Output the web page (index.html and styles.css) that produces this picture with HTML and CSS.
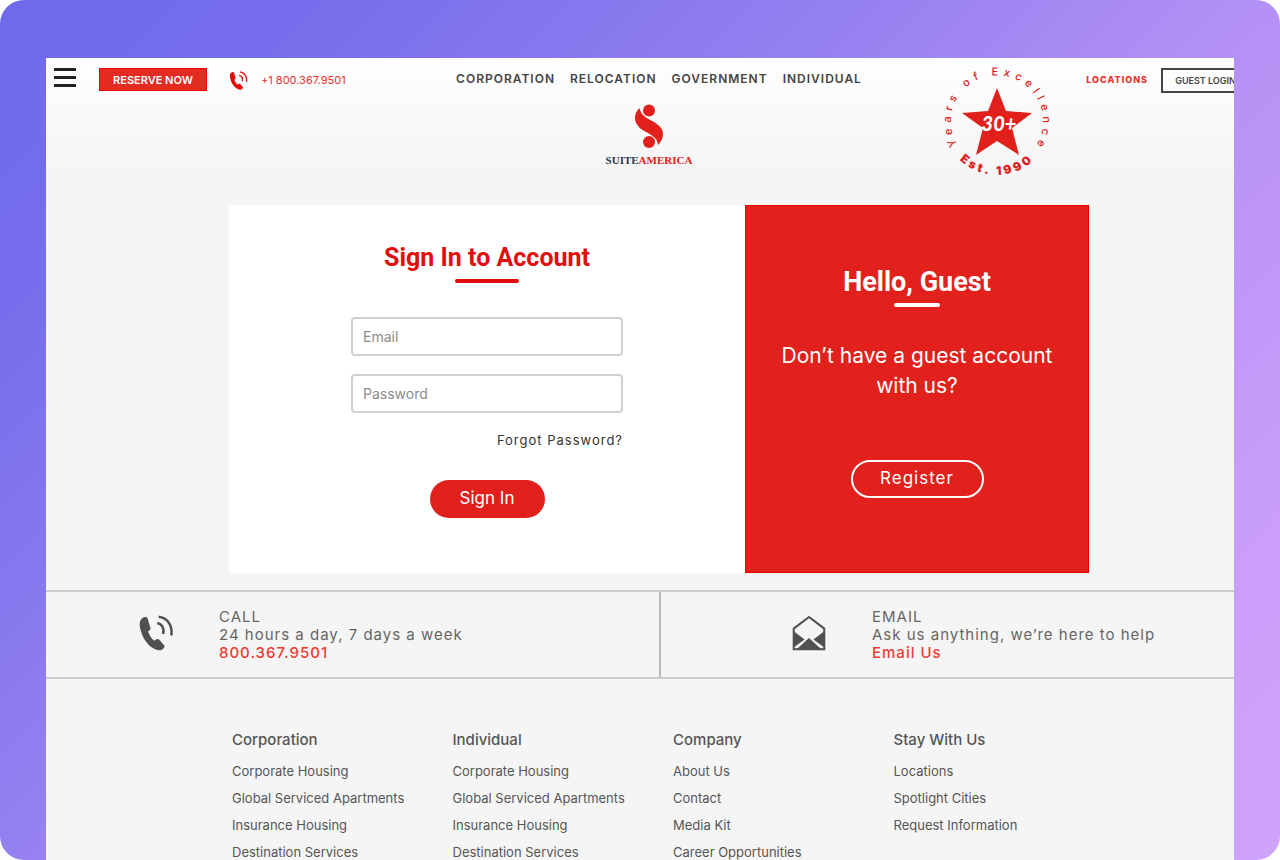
FILE: index.html
```html
<!DOCTYPE html>
<html lang="en">
<head>
    <meta charset="UTF-8">
    <meta name="viewport" content="width=device-width, initial-scale=1.0">
    <title>Sign In | SuiteAmerica</title>
    <link rel="stylesheet" href="styles.css">
</head>
<body>
    <svg class="symbols" aria-hidden="true">
        <symbol id="phone" viewBox="30 33 101 102">
            <path fill="currentColor" d="M45 40C33 45 32 60 38 80C45 105 65 130 88 133C97 134 104 127 105 121L90 103C85 99 80 103 76 106C70 104 61 88 58 80C63 77 67 73 64 68L57 43C55 39 50 38 45 40Z"/>
            <path fill="none" stroke="currentColor" stroke-width="7" d="M84 56C98 58 104 70 101 87M88 38C113 41 128 62 124 91"/>
        </symbol>
    </svg>

    <div class="frame">
        <div class="site">
            <div class="page">
                <header class="header">
                    <div class="header-left">
                        <button class="menu" aria-label="Menu"><span></span><span></span><span></span></button>
                        <a class="reserve" href="#">RESERVE NOW</a>
                        <a class="phone" href="#"><svg><use href="#phone"/></svg>+1 800.367.9501</a>
                    </div>
                    <div class="header-center">
                        <nav class="nav">
                            <a href="#">CORPORATION</a>
                            <a href="#">RELOCATION</a>
                            <a href="#">GOVERNMENT</a>
                            <a href="#">INDIVIDUAL</a>
                        </nav>
                        <a class="logo" href="#">
                            <svg viewBox="0 0 28 45">
                                <circle cx="14" cy="6.5" r="6"/>
                                <circle cx="14" cy="38" r="6"/>
                                <path d="M4.5 4C-1 9-1 16 2 20.5C6 27 15 29 19.5 33.5C22 36 22.5 38 23 41C29 35 29 28 26 24C21 17 12 16 7.5 10.5C5.5 8 5 6 4.5 4Z"/>
                            </svg>
                            <span class="logo-name">SUITE<b>AMERICA</b></span>
                        </a>
                    </div>
                    <div class="header-right">
                        <svg class="badge" viewBox="0 0 110 110">
                            <path id="arc-top" fill="none" d="M15.5 78A46 46 0 1 1 94.5 78"/>
                            <path id="arc-bottom" fill="none" d="M14 89A54 54 0 0 0 96 89"/>
                            <path class="star" d="M55 21L64 44L90 46L70 61L77 88L55 74L34 88L41 61L20 46L46 44Z"/>
                            <text class="badge-years"><textPath href="#arc-top">Years of Excellence</textPath></text>
                            <text class="badge-est"><textPath href="#arc-bottom" startOffset="50%">Est. 1990</textPath></text>
                            <text class="badge-num" x="57" y="64">30+</text>
                        </svg>
                        <a class="locations" href="#">LOCATIONS</a>
                        <a class="guest-login" href="#">GUEST LOGIN</a>
                    </div>
                </header>

                <main class="card">
                    <form class="signin">
                        <h1>Sign In to Account</h1>
                        <input type="email" placeholder="Email" aria-label="Email">
                        <input type="password" placeholder="Password" aria-label="Password">
                        <a class="forgot" href="#">Forgot Password?</a>
                        <button class="btn" type="button">Sign In</button>
                    </form>
                    <section class="guest">
                        <h2>Hello, Guest</h2>
                        <p>Don’t have a guest account with us?</p>
                        <button class="btn btn-outline" type="button">Register</button>
                    </section>
                </main>

                <section class="contact">
                    <div class="contact-item">
                        <svg class="contact-icon"><use href="#phone"/></svg>
                        <div>
                            <p>CALL</p>
                            <p>24 hours a day, 7 days a week</p>
                            <a href="#">800.367.9501</a>
                        </div>
                    </div>
                    <div class="contact-item">
                        <svg class="contact-icon" viewBox="0 0 96 106">
                            <path fill="none" stroke="currentColor" stroke-width="6" d="M3 40L48 6L93 40V101H3Z"/>
                            <path fill="currentColor" d="M3 48L35 72L3 96ZM93 48L61 72L93 96ZM10 102L48 68L86 102Z"/>
                        </svg>
                        <div>
                            <p>EMAIL</p>
                            <p>Ask us anything, we’re here to help</p>
                            <a href="#">Email Us</a>
                        </div>
                    </div>
                </section>

                <footer class="footer">
                    <div>
                        <h3>Corporation</h3>
                        <a href="#">Corporate Housing</a>
                        <a href="#">Global Serviced Apartments</a>
                        <a href="#">Insurance Housing</a>
                        <a href="#">Destination Services</a>
                    </div>
                    <div>
                        <h3>Individual</h3>
                        <a href="#">Corporate Housing</a>
                        <a href="#">Global Serviced Apartments</a>
                        <a href="#">Insurance Housing</a>
                        <a href="#">Destination Services</a>
                    </div>
                    <div>
                        <h3>Company</h3>
                        <a href="#">About Us</a>
                        <a href="#">Contact</a>
                        <a href="#">Media Kit</a>
                        <a href="#">Career Opportunities</a>
                    </div>
                    <div>
                        <h3>Stay With Us</h3>
                        <a href="#">Locations</a>
                        <a href="#">Spotlight Cities</a>
                        <a href="#">Request Information</a>
                    </div>
                </footer>
            </div>
        </div>
    </div>
</body>
</html>
```
FILE: styles.css
```css
* {
    box-sizing: border-box;
}
body {
    margin: 0;
    background: #fff;
    font-family: Inter, "Liberation Sans", sans-serif;
    color: #555;
}
a {
    color: inherit;
    text-decoration: none;
}
h1, h2, h3, p {
    margin: 0;
}
button, input {
    font-family: inherit;
}
.symbols {
    display: none;
}
.frame {
    height: 100vh;
    overflow: hidden;
    padding: 58px 46px 0;
    border-radius: 24px;
    background: linear-gradient(135deg, #6f69ec 0%, #756dec 14%, #9580f0 40%, #b591f5 60%, #cb9efb 85%, #cfa2fb 100%);
}
.site {
    height: 100%;
    overflow: hidden;
    background: #f5f5f5;
}
/* a little wider than the frame, runs off its right edge */
.page {
    width: calc(100% + 38px);
}

.header {
    display: grid;
    grid-template-columns: 1fr auto 1fr;
    height: 125px;
    background: linear-gradient(#fefefe, #f4f4f4);
}
.header-left {
    display: flex;
    align-items: flex-start;
    padding: 10px 0 0 8px;
}
.menu {
    display: flex;
    flex-direction: column;
    gap: 5px;
    width: 22px;
    margin-right: 23px;
    padding: 0;
    border: 0;
    background: none;
}
.menu span {
    height: 3px;
    background: #222;
}
.reserve {
    width: 108px;
    height: 23px;
    margin-right: 22px;
    border: 1px solid #e00;
    background: #e32b22;
    color: #fff;
    font-size: 11px;
    font-weight: 600;
    line-height: 22px;
    text-align: center;
}
.phone {
    display: flex;
    align-items: center;
    gap: 13px;
    height: 24px;
    color: #e5322d;
    font-size: 11px;
}
.phone svg {
    width: 19px;
    height: 19px;
    color: #e00b0b;
}
.header-center {
    display: flex;
    flex-direction: column;
    align-items: center;
}
.nav {
    display: flex;
    gap: 15px;
    padding-top: 13px;
    color: #444;
    font-size: 12px;
    font-weight: 600;
    letter-spacing: 1px;
    line-height: 16px;
}
.logo {
    display: flex;
    flex-direction: column;
    align-items: center;
    margin: 17px 20px 0 0;
}
.logo svg {
    width: 28px;
    height: 45px;
    fill: #e2201b;
}
.logo-name {
    margin-top: 5px;
    color: #2d3c4c;
    font-family: "Liberation Serif", serif;
    font-size: 11px;
    font-weight: 700;
    line-height: 13px;
}
.logo-name b {
    color: #e2201b;
}
.header-right {
    display: flex;
    align-items: flex-start;
    justify-content: flex-end;
    padding-right: 22px;
}
.badge {
    flex: none;
    width: 110px;
    height: 110px;
    margin: 9px 34px 0 0;
    overflow: visible;
    fill: #e2201b;
}
.badge-years {
    font-size: 11px;
    font-weight: 500;
    letter-spacing: 5px;
}
.badge-est {
    font-size: 12px;
    font-weight: 900;
    letter-spacing: 3px;
    text-anchor: middle;
}
.badge-num {
    fill: #fff;
    font-family: Lato, sans-serif;
    font-size: 20px;
    font-style: italic;
    font-weight: 900;
    text-anchor: middle;
}
.locations {
    margin: 14px 13px 0 0;
    color: #e5322d;
    font-size: 9px;
    font-weight: 800;
    letter-spacing: 1px;
    line-height: 16px;
}
.guest-login {
    width: 89px;
    height: 25px;
    margin-top: 10px;
    border: 2px solid #444;
    color: #444;
    font-size: 9px;
    font-weight: 600;
    line-height: 21px;
    text-align: center;
    white-space: nowrap;
}

.card {
    display: grid;
    grid-template-columns: 3fr 2fr;
    width: 860px;
    height: 368px;
    margin: 22px auto 17px;
}
.signin, .guest {
    display: flex;
    flex-direction: column;
    align-items: center;
}
.signin {
    padding-top: 37px;
    background: #fff;
}
.guest {
    padding-top: 60px;
    background: #e2211c;
    border: 1px solid #e00;
    color: #fff;
}
.card h1, .card h2 {
    font-family: Roboto, sans-serif;
    font-weight: 700;
    line-height: 32px;
}
.card h1 {
    margin-bottom: 34px;
    color: #e20d0d;
    font-size: 25px;
}
.card h2 {
    font-size: 27px;
}
.card h1::after, .card h2::after {
    content: "";
    display: block;
    width: 64px;
    height: 4px;
    margin: 5px auto 0;
    border-radius: 2px;
    background: currentColor;
}
.card h2::after {
    width: 46px;
}
.signin input {
    width: 272px;
    height: 39px;
    margin-bottom: 18px;
    padding: 0 10px;
    border: 2px solid #d0d0d0;
    border-radius: 4px;
    font-size: 14px;
}
.signin input::placeholder {
    color: #8c8c8c;
}
.forgot {
    width: 272px;
    color: #333;
    font-size: 13px;
    letter-spacing: 1px;
    line-height: 18px;
    text-align: right;
}
.btn {
    width: 115px;
    height: 38px;
    margin-top: 31px;
    padding: 0 0 2px;
    border: 0;
    border-radius: 19px;
    background: #e2201b;
    color: #fff;
    font-size: 17px;
}
.guest p {
    width: 290px;
    margin-top: 34px;
    font-size: 21px;
    line-height: 30px;
    text-align: center;
}
.btn-outline {
    width: 133px;
    margin-top: 59px;
    border: 2px solid #fff;
    letter-spacing: 1px;
}

.contact {
    display: grid;
    grid-template-columns: 1fr 1fr;
    height: 89px;
    border-top: 2px solid #ccc;
    border-bottom: 2px solid #ccc;
}
.contact-item {
    display: flex;
    align-items: center;
    padding-left: 92px;
    color: #666;
    font-size: 15px;
    letter-spacing: 1px;
    line-height: 18px;
}
.contact-item + .contact-item {
    padding-left: 130px;
    border-left: 2px solid #bbb;
}
.contact-icon {
    width: 36px;
    height: 36px;
    margin: 0 45px 4px 0;
    color: #505050;
}
.contact-item a {
    color: #ee3a33;
    font-weight: 500;
}

.footer {
    display: grid;
    grid-template-columns: repeat(4, 1fr);
    width: 910px;
    margin: 50px auto 0;
    padding-left: 28px;
}
.footer h3 {
    margin-bottom: 7px;
    font-size: 15px;
    font-weight: 500;
    line-height: 22px;
}
.footer a {
    display: block;
    font-size: 13px;
    line-height: 27px;
}
```
